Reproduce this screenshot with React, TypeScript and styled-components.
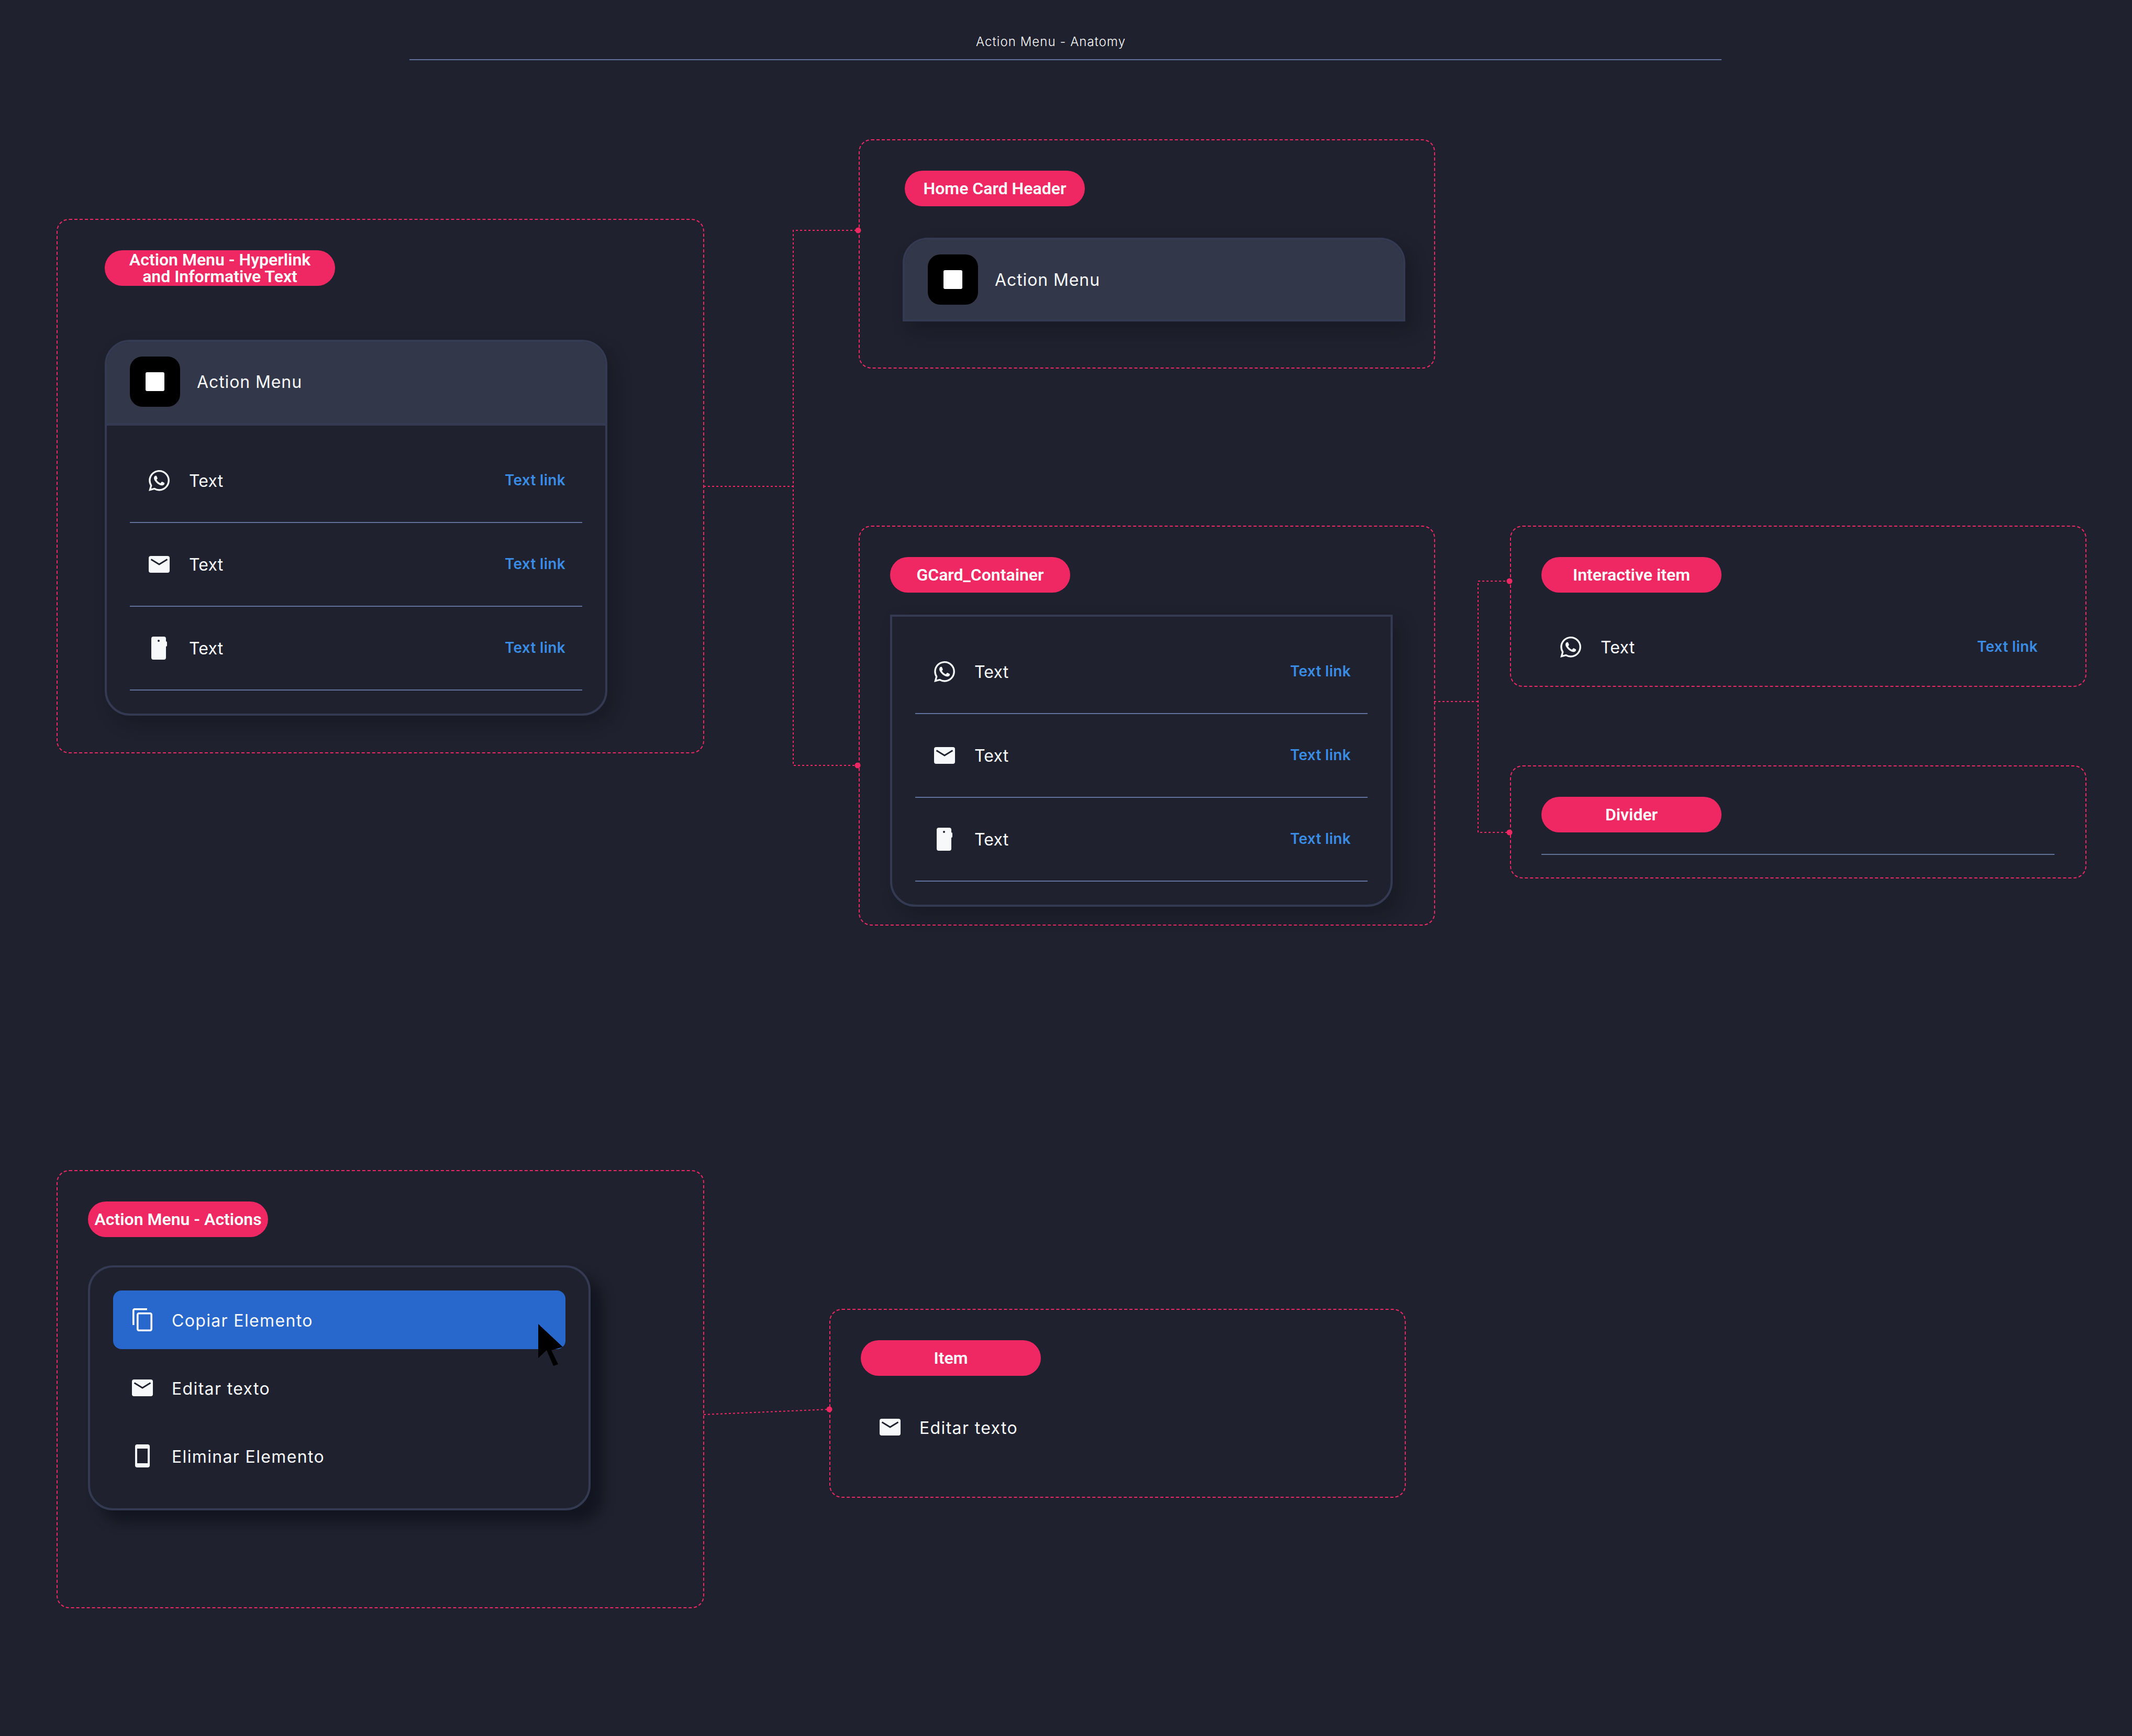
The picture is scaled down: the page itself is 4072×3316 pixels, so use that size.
import React from 'react';
import styled, { createGlobalStyle } from 'styled-components';
import { SiWhatsapp } from 'react-icons/si';

const GlobalStyle = createGlobalStyle`
  html, body {
    margin: 0;
    padding: 0;
    background: #1f212e;
  }
  * {
    box-sizing: border-box;
  }
`;

const PINK = '#ef2863';
const BG = '#1f212e';
const LINE = '#62729c';
const EDGE = '#343a52';
const WHITE = '#f7f8fa';
const BODY_FONT = 'Inter, "Noto Sans", sans-serif';

const Canvas = styled.div`
  position: relative;
  width: 4072px;
  height: 3316px;
  overflow: hidden;
  background: ${BG};
  font-family: ${BODY_FONT};
`;

const PageHead = styled.header`
  position: absolute;
  left: 782px;
  top: 65px;
  width: 2506px;
  height: 50px;
  padding: 0 0 0 1082px;
  border-bottom: 2px solid ${LINE};
  color: ${WHITE};
  font-size: 24px;
  font-weight: 300;
  line-height: 30px;
  letter-spacing: 1.05px;
`;

const Frame = styled.section<{ $x: number; $y: number; $w: number; $h: number; $pl: number; $gap: number }>`
  position: absolute;
  left: ${(p) => p.$x}px;
  top: ${(p) => p.$y}px;
  width: ${(p) => p.$w}px;
  height: ${(p) => p.$h}px;
  padding: 58px 0 0 ${(p) => p.$pl}px;
  display: flex;
  flex-direction: column;
  align-items: flex-start;
  gap: ${(p) => p.$gap}px;
  border: 2px dashed ${PINK};
  border-radius: 24px;
`;

const Pill = styled.div<{ $w?: number; $shift?: number }>`
  width: ${(p) => p.$w ?? 344}px;
  height: 68px;
  margin-left: ${(p) => p.$shift ?? 0}px;
  display: flex;
  align-items: center;
  justify-content: center;
  border-radius: 34px;
  background: ${PINK};
  color: #fff;
  font-family: Roboto, "Liberation Sans", sans-serif;
  font-size: 32px;
  font-weight: 600;
  line-height: 32px;
  text-align: center;
  white-space: nowrap;
`;

const Card = styled.div<{ $radius: string; $strong?: boolean }>`
  width: 960px;
  border: 4px solid ${EDGE};
  border-radius: ${(p) => p.$radius};
  background: ${BG};
  box-shadow: ${(p) =>
    p.$strong ? '22px 22px 22px rgba(10, 12, 20, 0.55)' : '14px 16px 32px rgba(10, 12, 20, 0.3)'};
`;

const HeaderBar = styled.div<{ $flat?: boolean }>`
  display: flex;
  align-items: center;
  gap: 32px;
  padding: 28px 44px ${(p) => (p.$flat ? '28px' : '31px')};
  border-radius: 44px 44px 0 0;
  background: #323749;
  border-bottom: ${(p) => (p.$flat ? '0' : `5px solid ${EDGE}`)};
`;

const Badge = styled.div`
  width: 96px;
  height: 96px;
  display: flex;
  align-items: center;
  justify-content: center;
  border-radius: 24px;
  background: #000;
`;

const BadgeSquare = styled.div`
  width: 36px;
  height: 36px;
  border-radius: 3px;
  background: #fff;
`;

const HeaderTitle = styled.span`
  color: ${WHITE};
  font-size: 32px;
  font-weight: 400;
  letter-spacing: 0.9px;
`;

const RowList = styled.div`
  padding: 26px 44px 44px;
`;

const Row = styled.div<{ $divider?: boolean; $h?: number; $w?: number }>`
  width: ${(p) => (p.$w ? `${p.$w}px` : '100%')};
  height: ${(p) => p.$h ?? 160}px;
  display: flex;
  align-items: center;
  padding: 0 32px 0 36px;
  border-bottom: ${(p) => (p.$divider === false ? '0' : `2px solid ${LINE}`)};
`;

const IconSlot = styled.span`
  flex: none;
  width: 40px;
  height: 44px;
  margin-right: 37px;
  display: flex;
  align-items: center;
  justify-content: center;
  color: ${WHITE};
`;

const RowText = styled.span`
  flex: 1;
  color: ${WHITE};
  font-size: 32px;
  font-weight: 400;
  letter-spacing: 0.2px;
  margin-top: 1px;
`;

const ActionText = styled(RowText)`
  letter-spacing: 1.35px;
  margin-top: 2px;
  margin-left: -1px;
`;

const TextLink = styled.a`
  color: #3b8ce4;
  font-size: 28px;
  font-weight: 600;
  letter-spacing: 0.3px;
  margin-top: -3px;
`;

const Rule = styled.div`
  width: 980px;
  height: 2px;
  background: ${LINE};
`;

const ActionList = styled.div`
  display: flex;
  flex-direction: column;
  gap: 18px;
  padding: 44px;
`;

const ActionRow = styled.div<{ $active?: boolean }>`
  position: relative;
  height: 112px;
  display: flex;
  align-items: center;
  padding: 0 32px 0 36px;
  border-radius: 16px;
  background: ${(p) => (p.$active ? '#2868cc' : 'transparent')};
`;

const Pointer = styled.svg`
  position: absolute;
  left: 812px;
  top: 64px;
`;

const Wires = styled.svg`
  position: absolute;
  left: 0;
  top: 0;
  pointer-events: none;
`;

const MailIcon = () => (
  <svg width="40" height="32" viewBox="0 0 40 32">
    <rect width="40" height="32" rx="4" fill={WHITE} />
    <path d="M4.5 6.5 20 16 35.5 6.5" fill="none" stroke={BG} strokeWidth="3" />
  </svg>
);

const PhoneSolidIcon = () => (
  <svg width="30" height="44" viewBox="0 0 30 44">
    <rect width="28" height="44" rx="4" fill={WHITE} />
    <rect x="26" y="9" width="4" height="10" rx="2" fill={WHITE} />
    <circle cx="14" cy="8" r="2" fill={BG} />
  </svg>
);

const PhoneIcon = () => (
  <svg width="28" height="44" viewBox="0 0 28 44">
    <path fillRule="evenodd" d="M4 0h20a4 4 0 0 1 4 4v36a4 4 0 0 1-4 4H4a4 4 0 0 1-4-4V4a4 4 0 0 1 4-4Zm0 8v28h20V8Z" fill={WHITE} />
  </svg>
);

const CopyIcon = () => (
  <svg width="38" height="44" viewBox="0 0 38 44" fill="none" stroke="#fff" strokeWidth="3.6">
    <path d="M1.8 32V4a2.2 2.2 0 0 1 2.2-2.2h24" />
    <rect x="9.8" y="9.8" width="26.4" height="32.4" rx="2.4" />
  </svg>
);

const ItemRow = ({ icon, link, divider, h, w }: { icon: React.ReactNode; link?: boolean; divider?: boolean; h?: number; w?: number }) => (
  <Row $divider={divider} $h={h} $w={w}>
    <IconSlot>{icon}</IconSlot>
    <RowText>Text</RowText>
    {link && <TextLink>Text link</TextLink>}
  </Row>
);

const Rows = () => (
  <RowList>
    <ItemRow link icon={<SiWhatsapp size={40} />} />
    <ItemRow link icon={<MailIcon />} />
    <ItemRow link icon={<PhoneSolidIcon />} />
  </RowList>
);

const CardHeader = ({ flat }: { flat?: boolean }) => (
  <HeaderBar $flat={flat}>
    <Badge>
      <BadgeSquare />
    </Badge>
    <HeaderTitle>Action Menu</HeaderTitle>
  </HeaderBar>
);

// dashed leader lines between the frames
const wires = [
  'M1344 929H1515',
  'M1636 440H1515V1462H1636',
  'M2739 1340H2823',
  'M2883 1110H2823V1590H2883',
  'M1344 2702L1584 2692',
];
const dots = [
  [1639, 440],
  [1638, 1462],
  [2883, 1110],
  [2883, 1590],
  [1584, 2692],
];

export default function App() {
  return (
    <Canvas>
      <GlobalStyle />
      <PageHead>Action Menu - Anatomy</PageHead>

      <Frame $x={108} $y={418} $w={1237} $h={1021} $pl={90} $gap={103}>
        <Pill $w={440}>
          Action Menu - Hyperlink
          <br />
          and Informative Text
        </Pill>
        <Card $radius="48px">
          <CardHeader />
          <Rows />
        </Card>
      </Frame>

      <Frame $x={1640} $y={266} $w={1101} $h={438} $pl={82} $gap={60}>
        <Pill $shift={4}>Home Card Header</Pill>
        <Card $radius="48px 48px 0 0">
          <CardHeader flat />
        </Card>
      </Frame>

      <Frame $x={1640} $y={1004} $w={1101} $h={764} $pl={58} $gap={42}>
        <Pill>GCard_Container</Pill>
        <Card $radius="0 0 48px 48px">
          <Rows />
        </Card>
      </Frame>

      <Frame $x={2884} $y={1004} $w={1101} $h={308} $pl={58} $gap={48}>
        <Pill>Interactive item</Pill>
        <ItemRow link divider={false} h={112} w={980} icon={<SiWhatsapp size={40} />} />
      </Frame>

      <Frame $x={2884} $y={1462} $w={1101} $h={216} $pl={58} $gap={41}>
        <Pill>Divider</Pill>
        <Rule />
      </Frame>

      <Frame $x={108} $y={2235} $w={1237} $h={837} $pl={58} $gap={54}>
        <Pill>Action Menu - Actions</Pill>
        <Card $radius="48px" $strong>
          <ActionList>
            <ActionRow $active>
              <IconSlot>
                <CopyIcon />
              </IconSlot>
              <ActionText>Copiar Elemento</ActionText>
              <Pointer width="47" height="80" viewBox="0 0 47 80">
                <path d="M0 0 47 44 25 50 38 77 29 80 16 50 0 65Z" fill="#000" />
              </Pointer>
            </ActionRow>
            <ActionRow>
              <IconSlot>
                <MailIcon />
              </IconSlot>
              <ActionText>Editar texto</ActionText>
            </ActionRow>
            <ActionRow>
              <IconSlot>
                <PhoneIcon />
              </IconSlot>
              <ActionText>Eliminar Elemento</ActionText>
            </ActionRow>
          </ActionList>
        </Card>
      </Frame>

      <Frame $x={1584} $y={2500} $w={1101} $h={361} $pl={58} $gap={42}>
        <Pill>Item</Pill>
        <Row $divider={false} $h={112} $w={980}>
          <IconSlot>
            <MailIcon />
          </IconSlot>
          <ActionText>Editar texto</ActionText>
        </Row>
      </Frame>

      <Wires width="4072" height="3316" viewBox="0 0 4072 3316">
        {wires.map((d) => (
          <path key={d} d={d} fill="none" stroke={PINK} strokeWidth="2" strokeDasharray="4 4" />
        ))}
        {dots.map(([cx, cy]) => (
          <circle key={`${cx}-${cy}`} cx={cx} cy={cy} r="5.5" fill={PINK} />
        ))}
      </Wires>
    </Canvas>
  );
}
